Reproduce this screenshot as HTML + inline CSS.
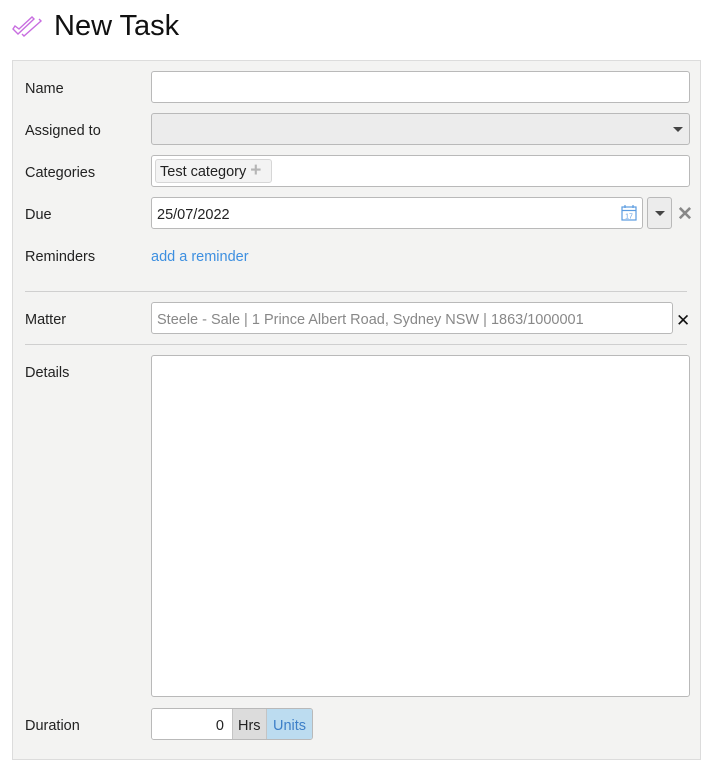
<!DOCTYPE html>
<html><head><meta charset="utf-8"><style>
*{box-sizing:border-box;margin:0;padding:0}
body{width:702px;height:753px;background:#fff;font-family:"Liberation Sans",sans-serif;font-size:14.5px;color:#222;position:relative;overflow:hidden}
.a{position:absolute}
.title{left:54px;top:10px;font-size:29px;color:#111}
.panel{left:12px;top:60px;width:689px;height:700px;background:#f3f3f2;border:1px solid #dcdcdc}
.lbl{left:25px;color:#222}
.inp{background:#fff;border:1px solid #b9b9b9;border-radius:3px}
.sep{left:25px;width:662px;height:1px;background:#cfcfcf}
</style></head><body>
<svg class="a" style="left:10px;top:14px" width="34" height="24" viewBox="0 0 34 24" fill="none" stroke="#c86ee0" stroke-width="1.4">
<path d="M3 15 L8 20 L24 5 L22 3 L9 15 L5 12 Z"/>
<path d="M12 20 L14 22 L31 7 L29 5"/>
</svg>
<div class="a title">New Task</div>
<div class="a panel"></div>

<div class="a lbl" style="top:81px">Name</div>
<div class="a inp" style="left:151px;top:71px;width:539px;height:32px"></div>

<div class="a lbl" style="top:123px">Assigned to</div>
<div class="a inp" style="left:151px;top:113px;width:539px;height:32px;background:#ececec"></div>
<div class="a" style="left:673px;top:127px;width:0;height:0;border-left:5px solid transparent;border-right:5px solid transparent;border-top:5px solid #444"></div>

<div class="a lbl" style="top:165px">Categories</div>
<div class="a inp" style="left:151px;top:155px;width:539px;height:32px"></div>
<div class="a" style="left:155px;top:159px;width:117px;height:24px;background:#f3f3f3;border:1px solid #d6d6d6;border-radius:3px;padding:5px 0 0 4px;line-height:14px">Test category <span style="color:#b5b5b5;font-weight:bold;font-size:19px;line-height:12px">+</span></div>

<div class="a lbl" style="top:207px">Due</div>
<div class="a inp" style="left:151px;top:197px;width:492px;height:32px;padding:9px 0 0 5px">25/07/2022</div>
<svg class="a" style="left:620px;top:204px" width="18" height="18" viewBox="0 0 18 18" fill="none" stroke="#5a9be0" stroke-width="1.2"><rect x="2" y="3" width="14" height="13"/><line x1="2" y1="6.5" x2="16" y2="6.5"/><line x1="5" y1="1" x2="5" y2="4"/><line x1="13" y1="1" x2="13" y2="4"/><text x="9" y="14.5" font-size="7" fill="#5a9be0" stroke="none" text-anchor="middle" font-family="Liberation Sans">17</text></svg>
<div class="a" style="left:647px;top:197px;width:25px;height:32px;background:#ececec;border:1px solid #b9b9b9;border-radius:3px"></div>
<div class="a" style="left:655px;top:211px;width:0;height:0;border-left:5px solid transparent;border-right:5px solid transparent;border-top:5px solid #444"></div>
<div class="a" style="left:677px;top:203px;font-size:19px;color:#888;font-weight:bold">✕</div>

<div class="a lbl" style="top:249px">Reminders</div>
<div class="a" style="left:151px;top:249px;color:#3d8fe0">add a reminder</div>

<div class="a sep" style="top:291px"></div>
<div class="a lbl" style="top:312px">Matter</div>
<div class="a inp" style="left:151px;top:302px;width:522px;height:32px;padding:9px 0 0 5px;color:#888">Steele - Sale | 1 Prince Albert Road, Sydney NSW | 1863/1000001</div>
<div class="a" style="left:676px;top:311px;font-size:17px;color:#111">✕</div>
<div class="a sep" style="top:344px"></div>

<div class="a lbl" style="top:365px">Details</div>
<div class="a inp" style="left:151px;top:355px;width:539px;height:342px"></div>

<div class="a lbl" style="top:718px">Duration</div>
<div class="a" style="left:151px;top:708px;width:162px;height:32px;border:1px solid #b9b9b9;border-radius:3px;overflow:hidden;display:flex">
<div style="width:80px;background:#fff;text-align:right;padding:9px 8px 0 0">0</div>
<div style="width:34px;background:#dcdcdc;border-left:1px solid #c4c4c4;padding:9px 0 0 5px">Hrs</div>
<div style="flex:1;background:#bcdcf0;border-left:1px solid #c4c4c4;padding:9px 0 0 6px;color:#3d7fc8">Units</div>
</div>
</body></html>
